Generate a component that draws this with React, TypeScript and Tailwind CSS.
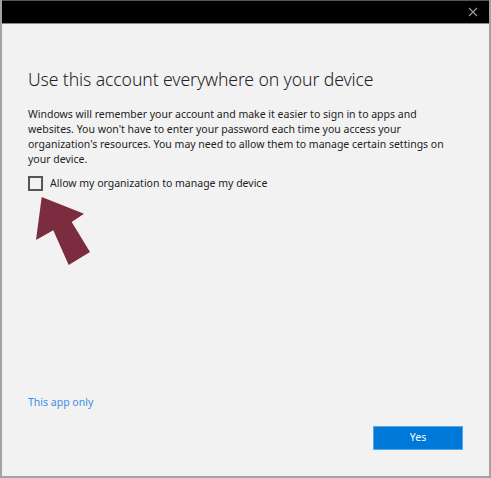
import React from "react";

export default function App() {
  return (
    <div
      className="w-[491px] h-[478px] flex flex-col bg-[#f2f2f2] border-2 border-t-0 border-[#a3a3a3] overflow-hidden"
      style={{ fontFamily: '"Noto Sans", "Open Sans", sans-serif' }}
    >
      <div className="h-[24px] shrink-0 bg-black border-t border-[#555] border-b border-b-[#8a8a8a] flex items-center justify-end pr-[11px]">
        <svg width="10" height="10" viewBox="0 0 10 10">
          <path d="M1 1 L9 9 M9 1 L1 9" stroke="#9a9a9a" strokeWidth="1.2" />
        </svg>
      </div>
      <div className="flex-1 flex flex-col pl-[26px] pr-[26px]">
        <h1 className="mt-[42px] text-[17.6px] leading-[26px] font-light text-[#222] tracking-[-0.1px]">
          Use this account everywhere on your device
        </h1>
        <p className="mt-[15px] text-[10.5px] leading-[15px] text-[#222] w-[420px] mr-[-20px]">
          Windows will remember your account and make it easier to sign in to apps and websites. You won't have to enter your password each time you access your organization's resources. You may need to allow them to manage certain settings on your device.
        </p>
        <label className="mt-[9px] flex items-center gap-[7px]">
          <span className="w-[15px] h-[15px] border-2 border-[#555] shrink-0" />
          <span className="text-[10.5px] text-[#222]">Allow my organization to manage my device</span>
        </label>
        <div className="relative h-0">
          <svg className="absolute left-[-2px] top-[3px]" width="70" height="75" viewBox="0 0 70 75">
            <polygon
              points="15.7,2 10,45 27.3,35.3 42.7,70 64,57 45.7,27 58,18.7"
              fill="#7b2c3f"
            />
          </svg>
        </div>
        <div className="flex-1" />
        <a className="text-[10.5px] text-[#3b8ee8] mb-[15px]">This app only</a>
        <div className="flex justify-end mb-[26px]">
          <button className="w-[90px] h-[24px] bg-[#0078d7] border border-[#5aa7e8] text-white text-[10.5px]">
            Yes
          </button>
        </div>
      </div>
    </div>
  );
}
